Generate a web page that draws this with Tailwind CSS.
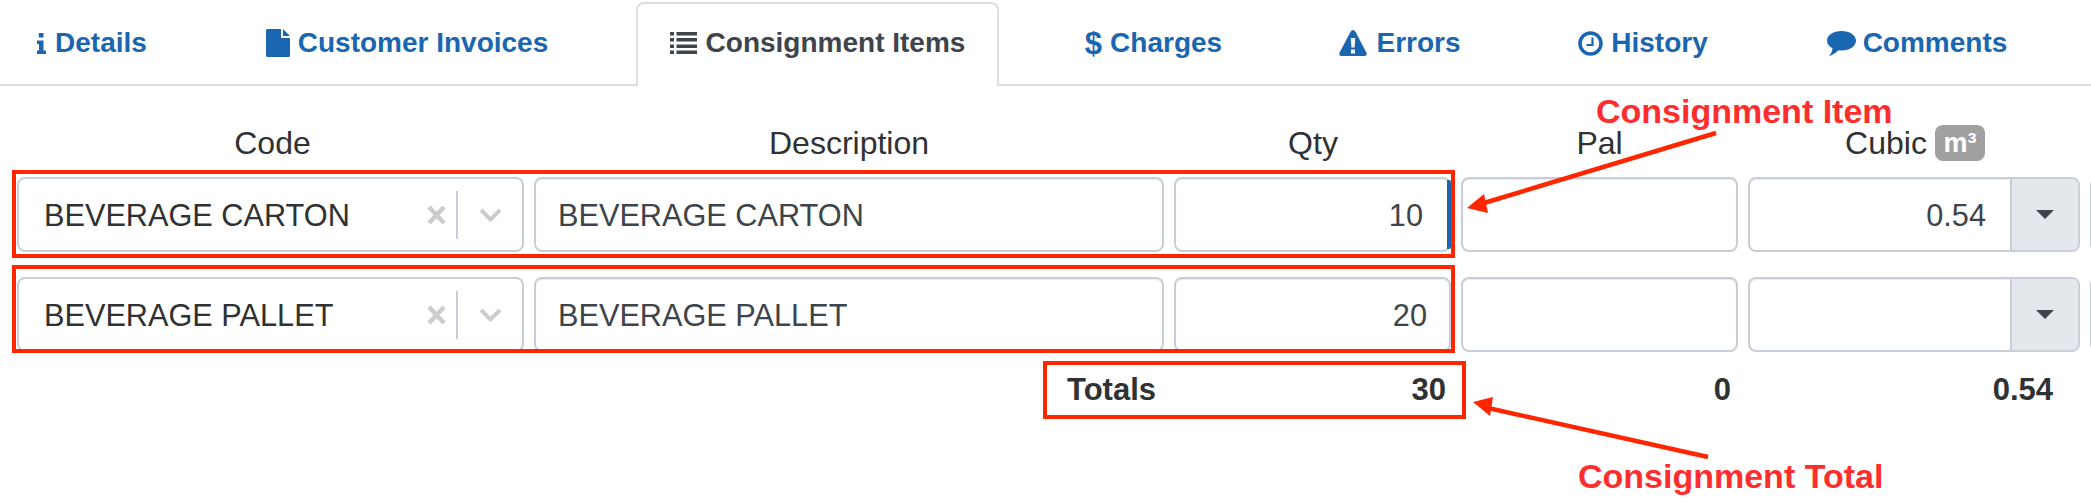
<!DOCTYPE html>
<html><head><meta charset="utf-8"><script src="https://cdn.jsdelivr.net/npm/@tailwindcss/browser@4"></script></head>
<body class="bg-white">
<div class="relative w-[2091px] h-[503px] overflow-hidden bg-white font-['Liberation_Sans',Arial,sans-serif] text-[#2f3133]">
  <nav class="flex h-[86px] border-b-2 border-[#dbdfe4] text-[28px] font-bold text-[#1a66b0] leading-none">
    <a class="w-[184px] h-[84px] pt-[2px] flex items-center justify-center gap-[9px]"><svg class="w-[9px] h-[21px] fill-current" viewBox="0 0 9 21"><path d="M1.800 0h4.700v4.600H1.800zM0 7.500h6.500v10H9V21H0v-3.500h2v-6.500H0z"/></svg>Details</a>
    <a class="w-[452px] h-[84px] pt-[2px] flex items-center justify-center gap-[8px] pr-[6px]"><svg class="w-[24px] h-[28px] fill-current" viewBox="0 0 24 28"><path d="M0 1.500Q0 0 1.500 0H15v8q0 1 1 1h8v17.500q0 1.500-1.500 1.500h-21Q0 28 0 26.500zM17 0l7 7h-7z"/></svg>Customer Invoices</a>
    <a class="w-[363px] h-[84px] mt-[2px] flex items-center justify-center gap-[9px] pb-[4px] bg-white border-2 border-b-0 border-[#dbdfe4] rounded-t-[8px] text-[#3e444b]"><svg class="w-[27px] h-[22px] fill-current" viewBox="0 0 27 22"><path d="M0 0h4v3.500H0zM6.500 0H27v3.500H6.500zM0 6h4v3.500H0zM6.500 6H27v3.500H6.500zM0 12.500h4V16H0zM6.500 12.500H27V16H6.500zM0 18.500h4V22H0zM6.500 18.500H27V22H6.500z"/></svg>Consignment Items</a>
    <a class="w-[309px] h-[84px] pt-[2px] flex items-center justify-center gap-[8px]"><span class="text-[31px]">$</span>Charges</a>
    <a class="w-[184px] h-[84px] pt-[2px] flex items-center justify-center gap-[9px]"><svg class="w-[28px] h-[26px] fill-current" viewBox="0 0 28 26"><path fill-rule="evenodd" d="M14 0q1.500 0 2.300 1.500l11.200 21.300Q28.500 26 25.500 26h-23Q-.5 26 .5 22.800L11.700 1.500Q12.500 0 14 0zM11.800 8l.6 9.500h3.200l.6-9.500zM12 19.500v4h4v-4z"/></svg>Errors</a>
    <a class="w-[302px] h-[84px] pt-[2px] flex items-center justify-center gap-[8px]"><svg class="w-[25px] h-[25px]" viewBox="0 0 25 25" fill="none" stroke="currentColor"><circle cx="12.500" cy="12.500" r="10.500" stroke-width="3.500"/><path d="M14.500 6.500v7.500H8.500" stroke-width="2.200"/></svg>History</a>
    <a class="w-[246px] h-[84px] pt-[2px] flex items-center justify-center gap-[7px]"><svg class="w-[29px] h-[25px] fill-current" viewBox="0 0 29 25"><path d="M14.500 0C22.500 0 29 4.200 29 9.700c0 5.500-6.500 9.800-14.500 9.800-1 0-2-.1-3-.2C8.800 22 5.500 24.300 2 25c1.500-1.800 3.200-4 3.500-7.800C2.100 15.400 0 12.700 0 9.700 0 4.200 6.500 0 14.500 0z"/></svg>Comments</a>
  </nav>

  <div class="grid grid-cols-[507px_630px_277px_277px_332px_100px] gap-x-[10px] pl-[17px] h-[91px] items-end pb-[16px] text-[32px] leading-[36px] text-center">
    <div class="pl-[4px]">Code</div>
    <div>Description</div>
    <div class="pl-[1px]">Qty</div>
    <div>Pal</div>
    <div class="flex items-center justify-center gap-[8px] pl-[2px]">Cubic <span class="w-[50px] h-[36px] rounded-[8px] bg-[#a0a0a0] text-white font-bold text-[27px] leading-[36px]">m³</span></div>
    <div></div>
  </div>

  <div class="grid grid-cols-[507px_630px_277px_277px_332px_100px] gap-x-[10px] pl-[17px] h-[75px] text-[30.7px] text-[#3e444b]">
    <div class="flex items-center border-2 border-[#c8ced8] rounded-[8px] pl-[25px] text-[#2f3133]">
      <span class="flex-1 pt-[3px]">BEVERAGE CARTON</span>
      <svg class="w-[19px] h-[20px] mr-[10px]" viewBox="0 0 19 20" fill="none" stroke="#cccccc" stroke-width="4.500"><path d="M2 2l15 16M17 2L2 18"/></svg>
      <span class="w-[2px] h-[48px] bg-[#c8ced8]"></span>
      <svg class="w-[23px] h-[14px] ml-[21px] mr-[20px]" viewBox="0 0 23 14" fill="none" stroke="#cccccc" stroke-width="4"><path d="M2 2l9.500 9.500L21 2"/></svg>
    </div>
    <div class="flex items-center border-2 border-[#c8ced8] rounded-[8px] pl-[22px] pt-[3px] shadow-[inset_0_1px_1px_rgba(0,0,0,0.08)]">BEVERAGE CARTON</div>
    <div class="relative flex items-center justify-end border-2 border-[#c8ced8] rounded-[8px] pr-[26px] pt-[3px] shadow-[inset_0_1px_1px_rgba(0,0,0,0.08)]">10<span class="absolute right-[-2px] top-[1px] bottom-[1px] w-[4px] bg-[#1a66b0] rounded-r-[2px]"></span></div>
    <div class="border-2 border-[#c8ced8] rounded-[8px] shadow-[inset_0_1px_1px_rgba(0,0,0,0.08)]"></div>
    <div class="flex border-2 border-[#c8ced8] rounded-[8px] shadow-[inset_0_1px_1px_rgba(0,0,0,0.08)]">
      <div class="flex-1 flex items-center justify-end pr-[24px] pt-[3px]">0.54</div>
      <div class="w-[68px] flex items-center justify-center bg-[#e4e7ec] border-l-2 border-[#c8ced8] rounded-r-[6px]"><svg class="w-[18px] h-[9px] fill-[#3e444b]" viewBox="0 0 18 9"><path d="M0 0h18L9 9z"/></svg></div>
    </div>
    <div class="border-2 border-[#c8ced8] rounded-[8px]"></div>
  </div>

  <div class="grid grid-cols-[507px_630px_277px_277px_332px_100px] gap-x-[10px] pl-[17px] h-[75px] mt-[25px] text-[30.7px] text-[#3e444b]">
    <div class="flex items-center border-2 border-[#c8ced8] rounded-[8px] pl-[25px] text-[#2f3133]">
      <span class="flex-1 pt-[3px]">BEVERAGE PALLET</span>
      <svg class="w-[19px] h-[20px] mr-[10px]" viewBox="0 0 19 20" fill="none" stroke="#cccccc" stroke-width="4.500"><path d="M2 2l15 16M17 2L2 18"/></svg>
      <span class="w-[2px] h-[48px] bg-[#c8ced8]"></span>
      <svg class="w-[23px] h-[14px] ml-[21px] mr-[20px]" viewBox="0 0 23 14" fill="none" stroke="#cccccc" stroke-width="4"><path d="M2 2l9.500 9.500L21 2"/></svg>
    </div>
    <div class="flex items-center border-2 border-[#c8ced8] rounded-[8px] pl-[22px] pt-[3px] shadow-[inset_0_1px_1px_rgba(0,0,0,0.08)]">BEVERAGE PALLET</div>
    <div class="flex items-center justify-end border-2 border-[#c8ced8] rounded-[8px] pr-[22px] pt-[3px] shadow-[inset_0_1px_1px_rgba(0,0,0,0.08)]">20</div>
    <div class="border-2 border-[#c8ced8] rounded-[8px] shadow-[inset_0_1px_1px_rgba(0,0,0,0.08)]"></div>
    <div class="flex border-2 border-[#c8ced8] rounded-[8px] shadow-[inset_0_1px_1px_rgba(0,0,0,0.08)]">
      <div class="flex-1"></div>
      <div class="w-[68px] flex items-center justify-center bg-[#e4e7ec] border-l-2 border-[#c8ced8] rounded-r-[6px]"><svg class="w-[18px] h-[9px] fill-[#3e444b]" viewBox="0 0 18 9"><path d="M0 0h18L9 9z"/></svg></div>
    </div>
    <div class="border-2 border-[#c8ced8] rounded-[8px]"></div>
  </div>

  <div class="grid grid-cols-[507px_630px_277px_277px_332px_100px] gap-x-[10px] pl-[17px] mt-[20px] text-[31px] leading-[36px] font-bold text-right">
    <div></div>
    <div class="pr-[8px]">Totals</div>
    <div class="pr-[5px]">30</div>
    <div class="pr-[7px]">0</div>
    <div class="pr-[27px]">0.54</div>
    <div></div>
  </div>

  <!-- Annotations over the page -->
  <div class="absolute left-[12px] top-[170px] w-[1443px] h-[88px] border-4 border-[#ff2600]"></div>
  <div class="absolute left-[12px] top-[265px] w-[1443px] h-[88px] border-4 border-[#ff2600]"></div>
  <div class="absolute left-[1043px] top-[361px] w-[423px] h-[58px] border-4 border-[#ff2600]"></div>
  <svg class="absolute left-0 top-0 w-[2091px] h-[503px]" viewBox="0 0 2091 503" fill="none">
    <path d="M1716 133L1484 203" stroke="#ff2600" stroke-width="4.500"/>
    <path d="M1467 208L1484 194L1488 213z" fill="#ff2600"/>
    <path d="M1708 457L1488 408" stroke="#ff2600" stroke-width="4.500"/>
    <path d="M1473 402L1493 397L1490 416z" fill="#ff2600"/>
  </svg>
  <div class="absolute left-[1596px] top-[93px] text-[#ff2d2d] font-bold text-[34px] leading-[36px] whitespace-nowrap">Consignment Item</div>
  <div class="absolute left-[1578px] top-[458px] text-[#ff2d2d] font-bold text-[34px] leading-[36px] whitespace-nowrap">Consignment Total</div>
</div>
</body></html>
